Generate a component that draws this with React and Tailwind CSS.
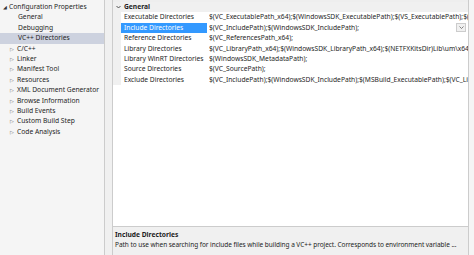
import React from "react";

const treeItems = [
  { label: "C/C++" },
  { label: "Linker" },
  { label: "Manifest Tool" },
  { label: "Resources" },
  { label: "XML Document Generator" },
  { label: "Browse Information" },
  { label: "Build Events" },
  { label: "Custom Build Step" },
  { label: "Code Analysis" },
];

const props = [
  { name: "Executable Directories", value: "$(VC_ExecutablePath_x64);$(WindowsSDK_ExecutablePath);$(VS_ExecutablePath);$(MSBuild_ExecutablePath)" },
  { name: "Include Directories", value: "$(VC_IncludePath);$(WindowsSDK_IncludePath);", selected: true },
  { name: "Reference Directories", value: "$(VC_ReferencesPath_x64);" },
  { name: "Library Directories", value: "$(VC_LibraryPath_x64);$(WindowsSDK_LibraryPath_x64);$(NETFXKitsDir)Lib\\um\\x64" },
  { name: "Library WinRT Directories", value: "$(WindowsSDK_MetadataPath);" },
  { name: "Source Directories", value: "$(VC_SourcePath);" },
  { name: "Exclude Directories", value: "$(VC_IncludePath);$(WindowsSDK_IncludePath);$(MSBuild_ExecutablePath);$(VC_LibraryPath_x64)" },
];

const App = () => {
  return (
    <div
      className="w-[474px] h-[255px] flex bg-[#f5f5f5] text-[6.7px] leading-[10.4px] text-[#1e1e1e] overflow-hidden"
      style={{ fontFamily: '"Noto Sans", "Open Sans", sans-serif' }}
    >
      {/* Tree */}
      <div className="w-[105px] shrink-0 bg-[#f5f5f5] border-r border-[#cccccc] pt-[2px]">
        <div className="flex items-center h-[10.4px] pl-[3px]">
          <span className="text-[5px] w-[6px] text-[#333]">◢</span>
          <span>Configuration Properties</span>
        </div>
        <div className="h-[10.4px] pl-[18px]">General</div>
        <div className="h-[10.4px] pl-[18px]">Debugging</div>
        <div className="h-[10.4px] pl-[18px] bg-[#cdd2df]">VC++ Directories</div>
        {treeItems.map((item) => (
          <div key={item.label} className="flex items-center h-[10.4px] pl-[10px]">
            <span className="text-[5px] w-[7px] text-[#666]">▷</span>
            <span>{item.label}</span>
          </div>
        ))}
      </div>

      {/* Splitter */}
      <div className="w-[7px] shrink-0 bg-[#f0f0f0]" />

      {/* Property grid */}
      <div className="w-[357px] shrink-0 flex flex-col border-l border-r border-[#cccccc] bg-white">
        <div className="h-[2px] bg-[#eeeeee]" />
        <div className="flex-1">
          <div className="flex items-center h-[10.4px] bg-[#f0f0f0]">
            <span className="w-[11px] pl-[3px] flex items-center">
              <svg width="5" height="4" viewBox="0 0 5 4">
                <path d="M0.5 1 L2.5 3 L4.5 1" stroke="#444" fill="none" strokeWidth="0.9" />
              </svg>
            </span>
            <span className="font-bold">General</span>
          </div>
          {props.map((p) => (
            <div key={p.name} className="flex h-[10.4px]">
              <div className="w-[8px] shrink-0 bg-[#f0f0f0]" />
              <div
                className={`w-[86px] shrink-0 pl-[3px] whitespace-nowrap overflow-hidden ${
                  p.selected ? "bg-[#3399ff] text-white" : ""
                }`}
              >
                {p.name}
              </div>
              <div className="flex-1 pl-[2px] whitespace-nowrap overflow-hidden flex items-center min-w-0">
                <span className="flex-1 overflow-hidden">{p.value}</span>
                {p.selected && (
                  <span className="w-[10px] h-[9px] mr-[2px] border border-[#cccccc] bg-[#f0f0f0] flex items-center justify-center">
                    <svg width="5" height="3" viewBox="0 0 5 3">
                      <path d="M0.5 0.5 L2.5 2.5 L4.5 0.5" stroke="#666" fill="none" strokeWidth="0.8" />
                    </svg>
                  </span>
                )}
              </div>
            </div>
          ))}
        </div>
        <div className="h-[29px] border-t border-[#cccccc] bg-[#f0f0f0] pl-[2px] pt-[3px]">
          <div className="font-bold leading-[10px]">Include Directories</div>
          <div className="text-[6.5px] leading-[10px] whitespace-nowrap tracking-[-0.05px]">
            Path to use when searching for include files while building a VC++ project.  Corresponds to environment variable ...
          </div>
        </div>
      </div>

      <div className="flex-1 bg-[#f5f5f5]" />
    </div>
  );
};

export default App;
